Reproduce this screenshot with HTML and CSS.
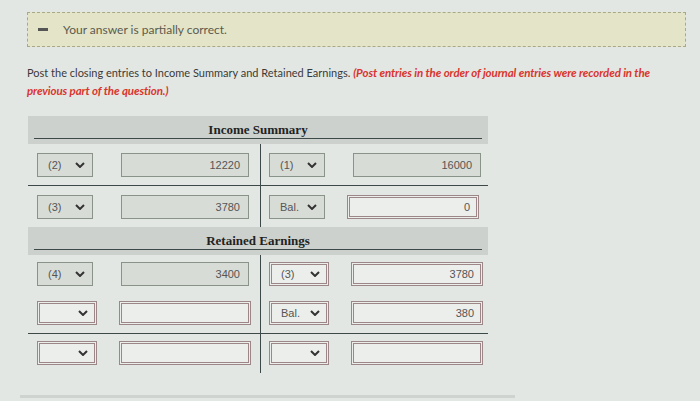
FILE: index.html
```html
<!DOCTYPE html>
<html lang="en">
<head>
  <meta charset="UTF-8" />
  <title>Closing entries</title>
  <link rel="stylesheet" href="styles.css">
</head>
<body>
<div class="page">

  <!-- result banner -->
  <div class="banner">
    <span class="minus"></span>
    <span>Your answer is partially correct.</span>
  </div>

  <p class="prompt">
    Post the closing entries to Income Summary and Retained Earnings.
    <em>(Post entries in the order of journal entries were recorded in the previous part of the question.)</em>
  </p>

  <div class="ledger">
    <div class="band"><h3>Income Summary</h3></div>

    <div class="row ruled">
      <div class="side">
        <div class="sel">(2) <svg viewBox="0 0 10 6"><polyline points="1,1 5,5 9,1"/></svg></div>
        <div class="field">12220</div>
      </div>
      <div class="side">
        <div class="sel">(1) <svg viewBox="0 0 10 6"><polyline points="1,1 5,5 9,1"/></svg></div>
        <div class="field">16000</div>
      </div>
    </div>
    <div class="row">
      <div class="side">
        <div class="sel">(3) <svg viewBox="0 0 10 6"><polyline points="1,1 5,5 9,1"/></svg></div>
        <div class="field">3780</div>
      </div>
      <div class="side">
        <div class="sel">Bal. <svg viewBox="0 0 10 6"><polyline points="1,1 5,5 9,1"/></svg></div>
        <div class="field bad">0</div>
      </div>
    </div>

    <div class="band"><h3>Retained Earnings</h3></div>

    <div class="row tight">
      <div class="side">
        <div class="sel">(4) <svg viewBox="0 0 10 6"><polyline points="1,1 5,5 9,1"/></svg></div>
        <div class="field">3400</div>
      </div>
      <div class="side">
        <div class="sel bad">(3) <svg viewBox="0 0 10 6"><polyline points="1,1 5,5 9,1"/></svg></div>
        <div class="field bad">3780</div>
      </div>
    </div>
    <div class="row tight ruled">
      <div class="side">
        <div class="sel bad"><span></span><svg viewBox="0 0 10 6"><polyline points="1,1 5,5 9,1"/></svg></div>
        <div class="field bad"></div>
      </div>
      <div class="side">
        <div class="sel bad">Bal. <svg viewBox="0 0 10 6"><polyline points="1,1 5,5 9,1"/></svg></div>
        <div class="field bad">380</div>
      </div>
    </div>
    <div class="row tight">
      <div class="side">
        <div class="sel bad"><span></span><svg viewBox="0 0 10 6"><polyline points="1,1 5,5 9,1"/></svg></div>
        <div class="field bad"></div>
      </div>
      <div class="side">
        <div class="sel bad"><span></span><svg viewBox="0 0 10 6"><polyline points="1,1 5,5 9,1"/></svg></div>
        <div class="field bad"></div>
      </div>
    </div>
  </div>

  <div class="foot"></div>
</div>
</body>
</html>
```

FILE: styles.css
```css
:root {
  --bg: #e3e7e3;
  --band: #cdd1cd;
  --rule: #3d4848;
  --box: #8a938a;
  --box-bg: #d8dcd6;
  --bad: #9c8688;
  --text: #555;
  --font: Lato, "Liberation Sans", sans-serif;
}

body {
  margin: 0;
  background: var(--bg);
  font-family: var(--font);
  color: #333;
}

.page {
  padding: 12px 0 0 27px;
}

.banner {
  width: 659px;
  height: 35px;
  box-sizing: border-box;
  display: flex;
  align-items: center;
  padding-left: 10px;
  border: 1px dashed #a9a98a;
  background: #e4e4c8;
  color: #5b5b4c;
  font-size: 12px;
}

.minus {
  width: 10px;
  height: 3px;
  background: #555;
  margin-right: 15px;
}

.prompt {
  width: 660px;
  margin: 17px 0 0;
  font-size: 11px;
  line-height: 18px;
  color: #3a3a3a;
}

.prompt em {
  color: #d9352e;
  font-weight: 700;
  font-size: 11.5px;
  letter-spacing: -0.1px;
}

.ledger {
  width: 460px;
  margin: 16px 0 0 1px;
}

.band {
  background: var(--band);
  padding: 0 6px 5px;
}

.band h3 {
  margin: 0;
  padding-top: 6px;
  text-align: center;
  font: bold 13px/16px "Liberation Serif", serif;
  color: #222;
  border-bottom: 1px solid var(--rule);
}

.row {
  display: grid;
  grid-template-columns: 232px 228px;
}

.row.ruled {
  border-bottom: 1px solid var(--rule);
}

.side {
  display: flex;
  align-items: center;
  gap: 28px;
  padding: 9px 0 8px 9px;
}

.tight .side {
  padding-top: 7px;
}

.side + .side {
  border-left: 1px solid var(--rule);
  padding-left: 8px;
}

.sel,
.field {
  height: 24px;
  box-sizing: border-box;
  border: 1px solid var(--box);
  background: var(--box-bg);
  font: 11px "Liberation Sans", sans-serif;
  color: var(--text);
}

.sel {
  width: 56px;
  display: flex;
  align-items: center;
  justify-content: space-between;
  padding: 0 7px 0 10px;
}

.sel svg {
  width: 10px;
  height: 6px;
  fill: none;
  stroke: #333;
  stroke-width: 2;
}

.field {
  width: 128px;
  line-height: 22px;
  text-align: right;
  padding-right: 8px;
}

.sel.bad,
.field.bad {
  border: 3px double var(--bad);
  background: #eceeec;
}

.sel.bad {
  width: 60px;
  padding: 0 6px 0 9px;
}

.field.bad {
  width: 132px;
  margin-left: -6px;
  line-height: 18px;
  padding-right: 6px;
}

.foot {
  width: 495px;
  margin: 22px 0 0 -7px;
  border-top: 3px solid #cfd3cf;
}
```
